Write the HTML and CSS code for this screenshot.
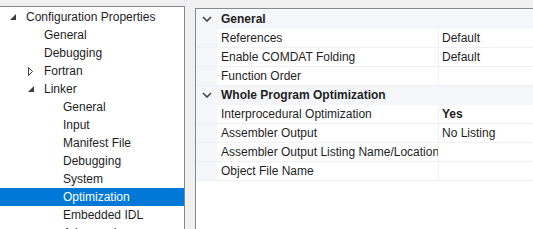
FILE: index.html
```html
<!DOCTYPE html>
<html lang="en">
<head>
    <title>Property Pages</title>
    <link rel="stylesheet" href="styles.css">
</head>
<body>
<div class="pages">
    <div class="tree">
        <div class="node lv0"><span class="arrow"><svg width="6" height="6"><polygon points="6,0 6,6 0,6" fill="#3c3c3c"/></svg></span>Configuration Properties</div>
        <div class="node lv1"><span class="arrow"></span>General</div>
        <div class="node lv1"><span class="arrow"></span>Debugging</div>
        <div class="node lv1"><span class="arrow"><svg width="6" height="9"><polygon points="0.5,0.5 4.5,4.5 0.5,8.5" fill="none" stroke="#3c3c3c"/></svg></span>Fortran</div>
        <div class="node lv1"><span class="arrow"><svg width="6" height="6"><polygon points="6,0 6,6 0,6" fill="#3c3c3c"/></svg></span>Linker</div>
        <div class="node lv2"><span class="arrow"></span>General</div>
        <div class="node lv2"><span class="arrow"></span>Input</div>
        <div class="node lv2"><span class="arrow"></span>Manifest File</div>
        <div class="node lv2"><span class="arrow"></span>Debugging</div>
        <div class="node lv2"><span class="arrow"></span>System</div>
        <div class="node lv2 selected"><span class="arrow"></span>Optimization</div>
        <div class="node lv2"><span class="arrow"></span>Embedded IDL</div>
        <div class="node lv2"><span class="arrow"></span>Advanced</div>
    </div>
    <div class="grid">
        <div class="row category">
            <span class="gutter"><svg width="10" height="6"><path d="M1 1 L5 5 L9 1" fill="none" stroke="#444" stroke-width="1.6"/></svg></span>
            <span class="name">General</span>
        </div>
        <div class="row"><span class="gutter"></span><span class="name">References</span><span class="value">Default</span></div>
        <div class="row"><span class="gutter"></span><span class="name">Enable COMDAT Folding</span><span class="value">Default</span></div>
        <div class="row"><span class="gutter"></span><span class="name">Function Order</span><span class="value"></span></div>
        <div class="row category">
            <span class="gutter"><svg width="10" height="6"><path d="M1 1 L5 5 L9 1" fill="none" stroke="#444" stroke-width="1.6"/></svg></span>
            <span class="name">Whole Program Optimization</span>
        </div>
        <div class="row"><span class="gutter"></span><span class="name">Interprocedural Optimization</span><span class="value bold">Yes</span></div>
        <div class="row"><span class="gutter"></span><span class="name">Assembler Output</span><span class="value">No Listing</span></div>
        <div class="row"><span class="gutter"></span><span class="name">Assembler Output Listing Name/Location</span><span class="value"></span></div>
        <div class="row"><span class="gutter"></span><span class="name">Object File Name</span><span class="value"></span></div>
    </div>
</div>
</body>
</html>
```

FILE: styles.css
```css
body{
    margin: 0;
    background-color: #f0f0f0;
    font-family: "Liberation Sans", Arial, sans-serif;
    font-size: 12px;
    color: #1e1e1e;
    overflow: hidden;
}
.pages{
    display: flex;
    align-items: flex-start;
    gap: 10px;
    padding-top: 6px;
    height: 229px;
    box-sizing: border-box;
}
.tree{
    width: 184px;
    flex-shrink: 0;
    align-self: stretch;
    background-color: #fff;
    border-top: 1px solid #828790;
    border-right: 1px solid #828790;
    padding-top: 1px;
    overflow: hidden;
}
.node{
    display: flex;
    align-items: center;
    height: 18px;
    white-space: nowrap;
}
.lv0{ padding-left: 10px; }
.lv1{ padding-left: 28px; }
.lv2{ padding-left: 47px; }
.arrow{
    width: 16px;
    flex-shrink: 0;
    display: flex;
    align-items: center;
}
.selected{
    background-color: #0078d7;
    color: #fff;
}
.grid{
    flex: 1;
    align-self: stretch;
    margin-top: 2px;
    background-color: #fff;
    border-top: 1px solid #828790;
    border-left: 1px solid #828790;
    padding-top: 1px;
    min-width: 400px;
}
.row{
    display: flex;
    height: 18px;
    border-bottom: 1px solid #eef1f7;
    line-height: 18px;
    white-space: nowrap;
}
.gutter{
    width: 21px;
    flex-shrink: 0;
    background-color: #f4f6fa;
    display: flex;
    align-items: center;
    justify-content: center;
}
.name{
    width: 217px;
    flex-shrink: 0;
    padding-left: 4px;
    overflow: hidden;
    border-right: 1px solid #eef1f7;
}
.value{
    flex: 1;
    padding-left: 3px;
}
.category{
    background-color: #f4f6fa;
    border-bottom-color: #f4f6fa;
    font-weight: bold;
}
.category .name{
    border-right: none;
    overflow: visible;
}
.bold{
    font-weight: bold;
}
```
